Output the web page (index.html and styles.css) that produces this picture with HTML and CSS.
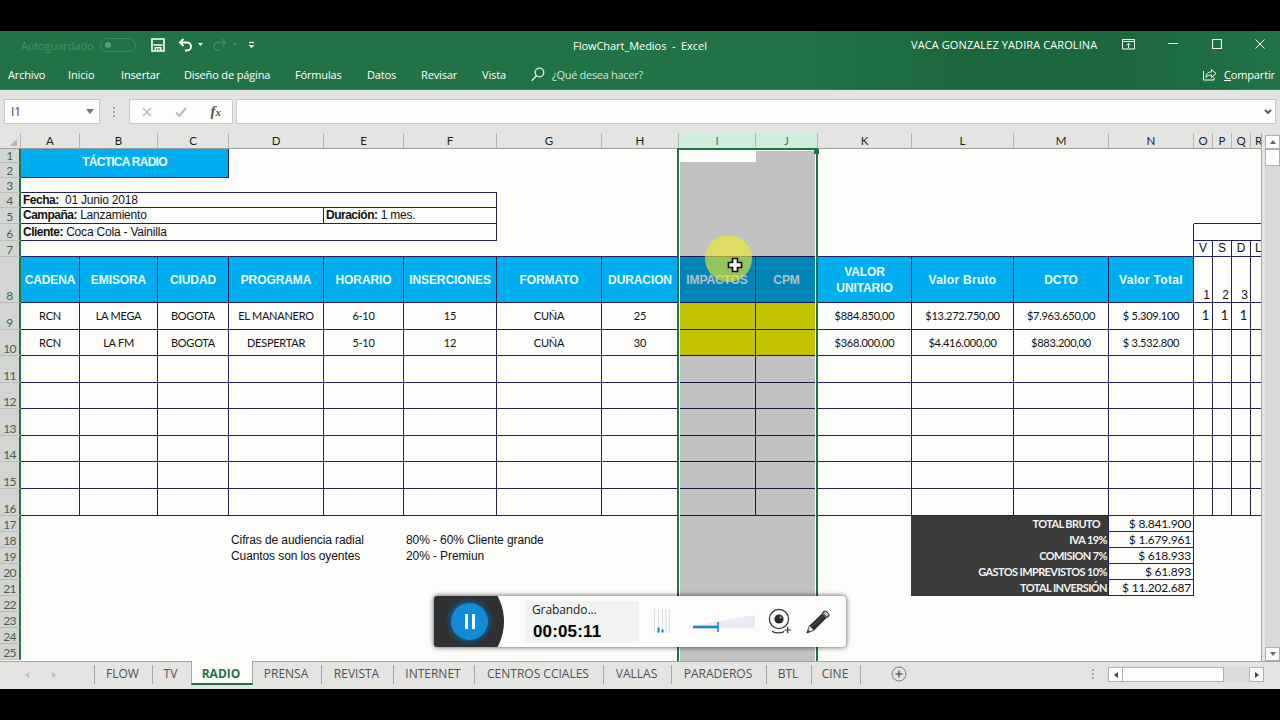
FILE: index.html
```html
<!DOCTYPE html>
<html lang="es">
<head>
  <meta charset="UTF-8" />
  <meta name="viewport" content="width=device-width, initial-scale=1" />
  <title>FlowChart_Medios - Excel</title>
  <link rel="stylesheet" href="styles.css">
</head>
<body>
  <div class="window">
    <header class="ribbon">
      <div class="titlebar">
        <div class="quick">
          <span class="autosave">Autoguardado</span>
          <span class="toggle"></span>
          <svg class="save" width="14" height="14" viewBox="0 0 14 14"><path d="M1 1h12v12H1z" fill="none" stroke="#fff" stroke-width="1.600"/><path d="M2.500 7h9M4.300 13V9.800h5.400V13" fill="none" stroke="#fff" stroke-width="1.500"/><path d="M6 11h1.500v2H6z" fill="#fff"/></svg>
          <svg class="undo" width="26" height="14" viewBox="0 0 26 14"><path d="M5.500 1L2 4.500L5.500 8M2 4.500H9a3.800 3.800 0 0 1 0 8H7" fill="none" stroke="#fff" stroke-width="2"/><path d="M20 5h5l-2.500 3z" fill="#fff"/></svg>
          <svg class="redo" width="26" height="14" viewBox="0 0 26 14"><path d="M10 1l3.500 3.500L10 8M13.500 4.500H6a3.800 3.800 0 0 0 0 8h2" fill="none" stroke="#438a62" stroke-width="1.600"/><path d="M20 5h5l-2.500 3z" fill="#438a62"/></svg>
          <svg width="7" height="8" viewBox="0 0 7 8"><path d="M1 1.500h5" stroke="#fff" stroke-width="1.200"/><path d="M.5 4h6l-3 3z" fill="#fff"/></svg>
        </div>
        <div class="doc-title">FlowChart_Medios&nbsp; -&nbsp; Excel</div>
        <div class="account">
          <span class="user">VACA GONZALEZ YADIRA CAROLINA</span>
          <svg width="13" height="11" viewBox="0 0 13 11"><path d="M.5.5h12v9.500H.5zM.5 2.500h12" fill="none" stroke="#fff"/><path d="M6.500 9V4.500M4.500 6.300l2-2 2 2" fill="none" stroke="#fff"/></svg>
          <svg width="10" height="10" viewBox="0 0 10 10"><path d="M0 4.500h10" stroke="#fff"/></svg>
          <svg width="10" height="10" viewBox="0 0 10 10"><path d="M.5.500h9v9h-9z" fill="none" stroke="#fff" stroke-width="1.200"/></svg>
          <svg width="10" height="10" viewBox="0 0 10 10"><path d="M.5.500l9 9M9.500.500l-9 9" stroke="#fff"/></svg>
        </div>
      </div>
      <nav class="menu">
        <span>Archivo</span>
        <span>Inicio</span>
        <span>Insertar</span>
        <span>Diseño de página</span>
        <span>Fórmulas</span>
        <span>Datos</span>
        <span>Revisar</span>
        <span>Vista</span>
        <svg width="14" height="15" viewBox="0 0 14 15"><circle cx="8.500" cy="5.500" r="4.300" fill="none" stroke="#dcf0e4" stroke-width="1.300"/><path d="M5.500 8.800L.8 13.800" stroke="#dcf0e4" stroke-width="1.500"/></svg>
        <span class="ask">¿Qué desea hacer?</span>
        <svg class="share-icon" width="16" height="13" viewBox="0 0 16 13"><path d="M1.500 3v9H12V9.500" fill="none" stroke="#fff"/><path d="M4 9.500c0-4 2.500-5.500 5.500-5.500V1.500L14 5.500l-4.500 4V7C7 7 5.500 7.500 4 9.500z" fill="none" stroke="#fff"/></svg>
        <span class="share"><u>C</u>ompartir</span>
      </nav>
    </header>

    <div class="formula-bar">
      <div class="name-box"><span>I1</span><svg width="8" height="5"><path d="M0 0h8L4 5z" fill="#777"/></svg></div>
      <div class="grip"><i></i><i></i><i></i></div>
      <div class="fx-box">
        <svg width="10" height="10" viewBox="0 0 10 10"><path d="M1 1l8 8M9 1L1 9" stroke="#b9bab9" stroke-width="1.500"/></svg>
        <svg width="12" height="10" viewBox="0 0 12 10"><path d="M1 5.500L4.300 9L11 1" fill="none" stroke="#b9bab9" stroke-width="2"/></svg>
        <span class="fx">f<small>x</small></span>
      </div>
      <div class="formula"><svg width="8" height="6" viewBox="0 0 8 6"><path d="M1 1l3 3 3-3" fill="none" stroke="#555" stroke-width="1.800"/></svg></div>
    </div>

    <main class="work">
      <div class="sheet">
        <table class="grid">
          <colgroup>
            <col class="w-row"><col class="w-a"><col class="w-b"><col class="w-c"><col class="w-d"><col class="w-e"><col class="w-f"><col class="w-g"><col class="w-h"><col class="w-i"><col class="w-j"><col class="w-k"><col class="w-l"><col class="w-m"><col class="w-n"><col class="w-o"><col class="w-o"><col class="w-o"><col class="w-r">
          </colgroup>
          <tr class="letters"><th class="corner"><svg width="7" height="7"><path d="M7 0v7H0z" fill="#b4b6b4"/></svg></th><th>A</th><th>B</th><th>C</th><th>D</th><th>E</th><th>F</th><th>G</th><th>H</th><th class="on">I</th><th class="on">J</th><th>K</th><th>L</th><th>M</th><th>N</th><th>O</th><th>P</th><th>Q</th><th class="cut">R</th></tr>
          <tr class="h14"><th>1</th><td class="title b" colspan="3" rowspan="2">TÁCTICA RADIO</td><td colspan="15"></td></tr>
          <tr class="h15"><th>2</th><td colspan="15"></td></tr>
          <tr class="h15"><th>3</th><td class="bb" colspan="6"></td><td colspan="12"></td></tr>
          <tr class="h15"><th>4</th><td class="b txt info" colspan="6"><b>Fecha:</b>&nbsp; 01 Junio 2018</td><td colspan="12"></td></tr>
          <tr class="h16"><th>5</th><td class="b txt info" colspan="4"><b>Campaña:</b> Lanzamiento</td><td class="b txt info" colspan="2"><b>Duración:</b> 1 mes.</td><td colspan="8"></td><td class="bb" colspan="4"></td></tr>
          <tr class="h17"><th>6</th><td class="b txt info" colspan="6"><b>Cliente:</b> Coca Cola - Vainilla</td><td class="br" colspan="8"></td><td class="bb" colspan="4"></td></tr>
          <tr class="h16"><th>7</th><td class="b" colspan="14"></td><td class="b day">V</td><td class="b day">S</td><td class="b day">D</td><td class="bb day cut">L</td></tr>
          <tr class="h46 heads"><th>8</th><td class="head b">CADENA</td><td class="head b">EMISORA</td><td class="head b">CIUDAD</td><td class="head b">PROGRAMA</td><td class="head b">HORARIO</td><td class="head b">INSERCIONES</td><td class="head b">FORMATO</td><td class="head b">DURACION</td><td class="head b">IMPACTOS</td><td class="head b">CPM</td><td class="head b">VALOR<br>UNITARIO</td><td class="head b mixed">Valor Bruto</td><td class="head b">DCTO</td><td class="head b mixed">Valor Total</td><td class="num b">1</td><td class="num b">2</td><td class="num b">3</td><td class="bb"></td></tr>
          <tr class="h27 data"><th>9</th><td class="b">RCN</td><td class="b">LA MEGA</td><td class="b">BOGOTA</td><td class="b">EL MANANERO</td><td class="b">6-10</td><td class="b">15</td><td class="b">CUÑA</td><td class="b">25</td><td class="b yellow"></td><td class="b yellow"></td><td class="b">$884.850,00</td><td class="b">$13.272.750,00</td><td class="b">$7.963.650,00</td><td class="b">$ 5.309.100</td><td class="one b">1</td><td class="one b">1</td><td class="one b">1</td><td class="bb"></td></tr>
          <tr class="h26 data"><th>10</th><td class="b">RCN</td><td class="b">LA FM</td><td class="b">BOGOTA</td><td class="b">DESPERTAR</td><td class="b">5-10</td><td class="b">12</td><td class="b">CUÑA</td><td class="b">30</td><td class="b yellow"></td><td class="b yellow"></td><td class="b">$368.000,00</td><td class="b">$4.416.000,00</td><td class="b">$883.200,00</td><td class="b">$ 3.532.800</td><td class="b"></td><td class="b"></td><td class="b"></td><td class="bb"></td></tr>
          <tr class="h27 data"><th>11</th><td class="b"></td><td class="b"></td><td class="b"></td><td class="b"></td><td class="b"></td><td class="b"></td><td class="b"></td><td class="b"></td><td class="b"></td><td class="b"></td><td class="b"></td><td class="b"></td><td class="b"></td><td class="b"></td><td class="b"></td><td class="b"></td><td class="b"></td><td class="bb"></td></tr>
          <tr class="h26 data"><th>12</th><td class="b"></td><td class="b"></td><td class="b"></td><td class="b"></td><td class="b"></td><td class="b"></td><td class="b"></td><td class="b"></td><td class="b"></td><td class="b"></td><td class="b"></td><td class="b"></td><td class="b"></td><td class="b"></td><td class="b"></td><td class="b"></td><td class="b"></td><td class="bb"></td></tr>
          <tr class="h27 data"><th>13</th><td class="b"></td><td class="b"></td><td class="b"></td><td class="b"></td><td class="b"></td><td class="b"></td><td class="b"></td><td class="b"></td><td class="b"></td><td class="b"></td><td class="b"></td><td class="b"></td><td class="b"></td><td class="b"></td><td class="b"></td><td class="b"></td><td class="b"></td><td class="bb"></td></tr>
          <tr class="h26 data"><th>14</th><td class="b"></td><td class="b"></td><td class="b"></td><td class="b"></td><td class="b"></td><td class="b"></td><td class="b"></td><td class="b"></td><td class="b"></td><td class="b"></td><td class="b"></td><td class="b"></td><td class="b"></td><td class="b"></td><td class="b"></td><td class="b"></td><td class="b"></td><td class="bb"></td></tr>
          <tr class="h27 data"><th>15</th><td class="b"></td><td class="b"></td><td class="b"></td><td class="b"></td><td class="b"></td><td class="b"></td><td class="b"></td><td class="b"></td><td class="b"></td><td class="b"></td><td class="b"></td><td class="b"></td><td class="b"></td><td class="b"></td><td class="b"></td><td class="b"></td><td class="b"></td><td class="bb"></td></tr>
          <tr class="h27 data"><th>16</th><td class="b"></td><td class="b"></td><td class="b"></td><td class="b"></td><td class="b"></td><td class="b"></td><td class="b"></td><td class="b"></td><td class="b"></td><td class="b"></td><td class="b"></td><td class="b"></td><td class="b"></td><td class="b"></td><td class="b"></td><td class="b"></td><td class="b"></td><td class="bb"></td></tr>
          <tr class="h16"><th>17</th><td colspan="11"></td><td class="dark indent" colspan="2">TOTAL BRUTO</td><td class="sum b">$ 8.841.900</td><td colspan="4"></td></tr>
          <tr class="h16"><th>18</th><td colspan="3"></td><td class="txt" colspan="2">Cifras de audiencia radial</td><td class="txt" colspan="3">80% - 60% Cliente grande</td><td colspan="3"></td><td class="dark" colspan="2">IVA 19%</td><td class="sum b">$ 1.679.961</td><td colspan="4"></td></tr>
          <tr class="h16"><th>19</th><td colspan="3"></td><td class="txt" colspan="2">Cuantos son los oyentes</td><td class="txt" colspan="3">20% - Premiun</td><td colspan="3"></td><td class="dark" colspan="2">COMISION 7%</td><td class="sum b">$ 618.933</td><td colspan="4"></td></tr>
          <tr class="h16"><th>20</th><td colspan="11"></td><td class="dark" colspan="2">GASTOS IMPREVISTOS 10%</td><td class="sum b">$ 61.893</td><td colspan="4"></td></tr>
          <tr class="h16"><th>21</th><td colspan="11"></td><td class="dark" colspan="2">TOTAL INVERSIÓN</td><td class="sum b">$ 11.202.687</td><td colspan="4"></td></tr>
          <tr class="h16"><th>22</th><td colspan="18"></td></tr>
          <tr class="h16"><th>23</th><td colspan="18"></td></tr>
          <tr class="h16"><th>24</th><td colspan="18"></td></tr>
          <tr class="h16"><th>25</th><td colspan="18"></td></tr>
        </table>

        <!-- selected columns I:J -->
        <div class="selection"><div class="active-cell"></div><div class="handle"></div></div>
        <div class="halo"></div>
        <svg class="cursor" width="16" height="16" viewBox="0 0 16 16"><path d="M5.500 1.500h5v4h4v5h-4v4h-5v-4h-4v-5h4z" fill="#fff" stroke="#111" stroke-width="1.700"/></svg>
      </div>
      <div class="vscroll">
        <div class="btn"><svg width="6" height="4"><path d="M0 4h6L3 0z" fill="#666"/></svg></div>
        <div class="thumb"></div>
        <div class="btn down"><svg width="6" height="4"><path d="M0 0h6L3 4z" fill="#666"/></svg></div>
      </div>

      <div class="recorder">
        <div class="rec-left"><div class="pause"><i></i><i></i></div></div>
        <div class="rec-time"><span>Grabando...</span><strong>00:05:11</strong></div>
        <svg class="levels" width="18" height="25" viewBox="0 0 18 25"><path d="M1.500 0v24M5.500 0v24M9.500 0v24M13 0v24M16.500 0v24" stroke="#d9dfe8" stroke-width="1.200"/><path d="M5.500 18.500v5M9.500 20.500v3" stroke="#1b86a8" stroke-width="2"/></svg>
        <svg class="volume" width="62" height="18" viewBox="0 0 62 18"><path d="M0 12L62 1v13H0z" fill="#e9ecf4"/><path d="M0 13h25" stroke="#1689cd" stroke-width="2.600"/><path d="M25 8v10" stroke="#1689cd" stroke-width="1.600"/></svg>
        <svg class="cam" width="24" height="27" viewBox="0 0 24 27"><circle cx="11" cy="11" r="9.600" fill="none" stroke="#333" stroke-width="1.200"/><circle cx="11" cy="11" r="4.600" fill="#2a2a2a"/><circle cx="12.500" cy="9.500" r="1.100" fill="#bbb"/><path d="M4 23c2 2.300 9 2.600 12 .5M16.500 22h6.500M19.700 18.800v6.500" fill="none" stroke="#333" stroke-width="1.200"/></svg>
        <svg class="pencil" width="24" height="24" viewBox="0 0 24 24"><path d="M3.500 15.500L16 3.500l4.500 4.500L8 20.500z" fill="#2e2e2e"/><path d="M.8 23l2.700-7.500L8 20.300z" fill="#fff" stroke="#333" stroke-width=".9"/><path d="M.8 23l1.200-3.500 2.200 2.200z" fill="#333"/><path d="M16.500 3L18.300 1.300q.9-.6 1.800.2l2.600 2.600q.8 1 0 1.900L21 7.600z" fill="#fff" stroke="#333" stroke-width="1.100"/><path d="M17.800 2l4.200 4.300" stroke="#555" stroke-width=".8"/><path d="M6 17L17 6.200" stroke="#666" stroke-width=".8"/></svg>
      </div>
    </main>

    <footer class="tabs">
      <div class="arrows"><svg width="4" height="6"><path d="M4 0v6L0 3z" fill="#bfc0bf"/></svg><svg width="4" height="6"><path d="M0 0v6l4-3z" fill="#bfc0bf"/></svg></div>
      <span>FLOW</span>
      <span class="before">TV</span>
      <span class="active">RADIO</span>
      <span>PRENSA</span>
      <span>REVISTA</span>
      <span>INTERNET</span>
      <span>CENTROS CCIALES</span>
      <span>VALLAS</span>
      <span>PARADEROS</span>
      <span>BTL</span>
      <span>CINE</span>
      <svg class="add" width="16" height="16" viewBox="0 0 16 16"><circle cx="8" cy="8" r="7" fill="none" stroke="#777"/><path d="M8 4.500v7M4.500 8h7" stroke="#666" stroke-width="1.600"/></svg>
      <div class="grip"><i></i><i></i><i></i></div>
      <div class="hscroll">
        <div class="btn"><svg width="4" height="6"><path d="M4 0v6L0 3z" fill="#444"/></svg></div>
        <div class="thumb"></div>
        <div class="btn right"><svg width="4" height="6"><path d="M0 0v6l4-3z" fill="#444"/></svg></div>
      </div>
    </footer>
  </div>
</body>
</html>
```
FILE: styles.css
```css
*, *::before, *::after { box-sizing: border-box; }
body {
  margin: 0;
  background: #000;
  font-family: "Open Sans", "Noto Sans", sans-serif;
  font-size: 12px;
  overflow: hidden;
}
svg { display: block; flex: none; }
.window {
  width: 1280px;
  height: 720px;
  padding-top: 31px;
}

/* title bar and menu */
.ribbon {
  height: 59px;
  background: #217346;
  background: linear-gradient(90deg, #217346 62%, #1c683d 75%, #1c683d 88%, #217346);
  border-bottom: 1px solid #2b8352;
  color: #fff;
  font-size: 11px;
}
.titlebar {
  height: 28px;
  display: grid;
  grid-template-columns: 560px 160px 1fr;
  align-items: center;
}
.quick {
  display: flex;
  align-items: center;
  padding-left: 21px;
}
.autosave {
  width: 79px;
  color: #4a9069;
  letter-spacing: -0.1px;
}
.toggle {
  width: 36px;
  height: 14px;
  border: 1px solid #438a62;
  border-radius: 8px;
  padding: 3px 4px;
}
.toggle::before {
  content: "";
  display: block;
  width: 6px;
  height: 6px;
  border-radius: 50%;
  background: #5b9d78;
}
.save { margin-left: 15px; }
.undo { margin-left: 13px; margin-right: 8px; }
.redo { margin-right: 10px; }
.doc-title {
  text-align: center;
  white-space: nowrap;
  letter-spacing: -0.05px;
}
.account {
  display: flex;
  align-items: center;
  padding: 0 15px 2px 191px;
}
.user {
  width: 211px;
  white-space: nowrap;
  letter-spacing: 0.1px;
}
.account svg:nth-of-type(1) { margin-right: 33px; }
.account svg:nth-of-type(2) { margin-right: 34px; }
.account svg:nth-of-type(3) { margin-right: 33px; }
.menu {
  height: 31px;
  display: grid;
  grid-template-columns: 60px 53px 63px 111px 72px 54px 61px 49px 21px 650px 22px 60px;
  align-items: center;
  padding-left: 8px;
  white-space: nowrap;
  letter-spacing: -0.15px;
}
.ask { color: #cfe6d8; letter-spacing: -0.3px; }

/* formula bar */
.formula-bar {
  height: 43px;
  background: #e4e5e3;
  display: flex;
  padding: 9px 4px 9px;
}
.name-box, .fx-box, .formula {
  background: #fcfdfb;
  border: 1px solid #c8c9c8;
  height: 25px;
  display: flex;
  align-items: center;
}
.name-box {
  width: 96px;
  justify-content: space-between;
  padding: 0 5px 0 6px;
  color: #444;
}
.grip {
  display: flex;
  flex-direction: column;
  justify-content: center;
  gap: 2px;
}
.grip i {
  width: 2px;
  height: 2px;
  background: #a3a4a3;
}
.formula-bar .grip { width: 29px; padding-left: 13px; }
.fx-box {
  width: 104px;
  padding: 0 11px 0 12px;
  justify-content: space-between;
}
.fx {
  font: italic bold 15px "Liberation Serif", serif;
  color: #555;
}
.fx small { font-size: 11px; }
.formula {
  flex: 1;
  margin-left: 3px;
  justify-content: flex-end;
  padding-right: 3px;
}

/* worksheet */
.work {
  position: relative;
  height: 528px;
  display: flex;
  background: #e4e5e3;
}
.sheet {
  position: relative;
  width: 1262px;
  background: #fcfdfb;
  border-right: 1px solid #a5a6a5;
  overflow: hidden;
}
.grid {
  table-layout: fixed;
  width: 1262px;
  border-spacing: 0;
  font: 12px/13px "Liberation Sans", sans-serif;
  color: #111;
}
.w-row { width: 21px; }
.w-a { width: 59px; }
.w-b { width: 78px; }
.w-c { width: 71px; }
.w-d { width: 95px; }
.w-e { width: 80px; }
.w-f { width: 93px; }
.w-g { width: 105px; }
.w-h { width: 77px; }
.w-i { width: 77px; }
.w-j { width: 62px; }
.w-k { width: 94px; }
.w-l { width: 102px; }
.w-m { width: 95px; }
.w-n { width: 85px; }
.w-o { width: 19px; }
.w-r { width: 11px; }
.grid th, .grid td {
  padding: 0;
  white-space: nowrap;
  overflow: hidden;
}
.grid th {
  background: #d3d5d3;
  border-right: 2px solid #217346;
  border-bottom: 1px solid #bcbebc;
  color: #48604f;
  font: 12px/13px Lato, sans-serif;
  letter-spacing: -0.7px;
  vertical-align: bottom;
  text-align: center;
}
.letters { height: 16px; }
.grid .letters th {
  background: #e4e5e3;
  border-right: 1px solid #b4b5b4;
  border-bottom: 1px solid #9fa19f;
  color: #222;
  font-size: 11.5px;
  line-height: 14px;
  letter-spacing: 0;
}
.grid .letters .on {
  background: #cdeedd;
  color: #3c7a5a;
}
.letters .corner svg { margin-left: 10px; margin-bottom: 2px; }
.grid .cut { border-right: 0; padding-left: 4px; text-align: left; }
.h14 { height: 14px; }
.h15 { height: 15px; }
.h16 { height: 16px; }
.h17 { height: 17px; }
.h26 { height: 26px; }
.h27 { height: 27px; }
.h46 { height: 46px; }
.b { border-right: 1px solid #20205c; border-bottom: 1px solid #20205c; }
.bb { border-bottom: 1px solid #20205c; }
.br { border-right: 1px solid #20205c; }
.grid .txt { padding-left: 2px; letter-spacing: -0.1px; }
.grid .info { letter-spacing: -0.2px; }
.info b { letter-spacing: -0.5px; }
.grid .title {
  background: #00aeef;
  color: #e9f9ff;
  font-weight: bold;
  text-align: center;
  letter-spacing: -0.75px;
  padding-bottom: 2px;
}
.head {
  background: #00aeef;
  color: #e9f9ff;
  font-weight: bold;
  line-height: 16px;
  text-align: center;
  letter-spacing: -0.1px;
}
.mixed { letter-spacing: 0.3px; }
.day { text-align: center; }
.grid .num {
  vertical-align: bottom;
  text-align: right;
  padding-right: 2px;
}
.grid .data td {
  font: 11px/13px Lato, sans-serif;
  letter-spacing: -0.25px;
  text-align: center;
  padding-bottom: 1px;
}
.grid .data .one {
  font-size: 13px;
  text-align: right;
  padding-right: 3px;
}
.yellow { background: #ff0; }
.grid .dark {
  background: #3b3b3b;
  border-right: 1px solid #20205c;
  box-shadow: -1px 0 #3b3b3b;
  color: #f3f3f3;
  font: bold 11px/13px Lato, sans-serif;
  letter-spacing: -0.6px;
  text-align: right;
  padding-right: 1px;
  padding-bottom: 1px;
  overflow: visible;
}
.grid .indent { padding-right: 8px; }
.grid .sum {
  font: 12px/13px Lato, sans-serif;
  letter-spacing: -0.2px;
  text-align: right;
  padding-right: 2px;
}

.selection {
  position: absolute;
  left: 677px;
  top: 15px;
  width: 141px;
  height: 520px;
  border: 2px solid #217346;
  border-bottom: 0;
  box-shadow: inset 1px 1px #fcfdfb, inset -1px 0 #fcfdfb;
  background: rgba(0,0,0,0.23);
}
.active-cell {
  width: 77px;
  height: 12px;
  background: #fcfdfb;
}
.handle {
  position: absolute;
  right: -3px;
  top: -1px;
  width: 5px;
  height: 5px;
  background: #217346;
}
.halo {
  position: absolute;
  left: 705px;
  top: 102px;
  width: 47px;
  height: 47px;
  border-radius: 50%;
  background: rgba(240,236,40,0.62);
}
.cursor {
  position: absolute;
  left: 727px;
  top: 124px;
}

/* scroll bars */
.vscroll {
  display: flex;
  flex-direction: column;
  width: 15px;
  margin: 2px 0 0 3px;
  background: #d8d9d8;
}
.btn, .thumb {
  background: #fcfdfb;
  border: 1px solid #b0b1b0;
}
.btn {
  height: 14px;
  display: flex;
  align-items: center;
  justify-content: center;
}
.vscroll .thumb { height: 17px; }
.vscroll .down { margin-top: auto; }

/* floating recorder */
.recorder {
  position: absolute;
  left: 434px;
  top: 463px;
  width: 412px;
  height: 51px;
  display: flex;
  align-items: center;
  background: #fcfdfb;
  border-radius: 4px;
  box-shadow: 0 0 4px 1px rgba(0,0,0,0.5);
}
.rec-left {
  width: 70px;
  height: 51px;
  background: #2f3133;
  border-radius: 3px 0 0 3px;
  clip-path: circle(54px at 16px 50%);
  display: flex;
  align-items: center;
  padding-left: 17px;
}
.pause {
  width: 37px;
  height: 37px;
  border-radius: 50%;
  background: #128cd6;
  box-shadow: 0 0 5px 2px #0d5c92;
  display: flex;
  align-items: center;
  justify-content: center;
  gap: 4px;
}
.pause i {
  width: 3px;
  height: 15px;
  background: #fff;
}
.rec-time {
  width: 114px;
  height: 42px;
  margin-left: 21px;
  padding: 0 7px;
  background: #f1f2f2;
  display: flex;
  flex-direction: column;
  color: #222;
  line-height: 18px;
  letter-spacing: -0.1px;
}
.rec-time strong {
  font: bold 17px/25px "Liberation Sans", sans-serif;
  letter-spacing: 0.15px;
  color: #000;
  margin-left: 1px;
}
.levels { margin-left: 14px; }
.volume { margin-left: 22px; margin-top: 2px; }
.cam { margin-left: 13px; }
.pencil { margin-left: 14px; }

/* sheet tabs */
.tabs {
  height: 28px;
  background: #e4e5e3;
  border-top: 1px solid #a5a6a5;
  display: grid;
  grid-template-columns: 95px 58px 38px 62px 69px 72px 81px 129px 68px 95px 45px 49px 199px 48px 156px;
  color: #505250;
  font-size: 12px;
}
.tabs > span {
  height: 19px;
  margin-top: 3px;
  padding-right: 2px;
  border-right: 1px solid #a5a6a5;
  text-align: center;
  line-height: 18px;
  white-space: nowrap;
}
.tabs > .before { border-right-color: transparent; }
.arrows {
  display: flex;
  align-items: center;
  gap: 23px;
  padding-left: 25px;
  height: 19px;
  margin-top: 3px;
  border-right: 1px solid #a5a6a5;
}
.tabs .active {
  height: 24px;
  margin-top: -1px;
  background: #fcfdfb;
  border-left: 1px solid #a5a6a5;
  border-bottom: 2px solid #217346;
  color: #217346;
  font-weight: bold;
  line-height: 25px;
}
.add { margin: 4px 0 0 30px; }
.tabs .grip { height: 24px; padding-left: 32px; }
.hscroll {
  display: flex;
  height: 15px;
  width: 156px;
  margin-top: 5px;
  background: #dcdddc;
}
.hscroll .btn { width: 15px; height: 15px; }
.hscroll .thumb { width: 101px; border-left: 0; }
.hscroll .right { margin-left: auto; }
```
